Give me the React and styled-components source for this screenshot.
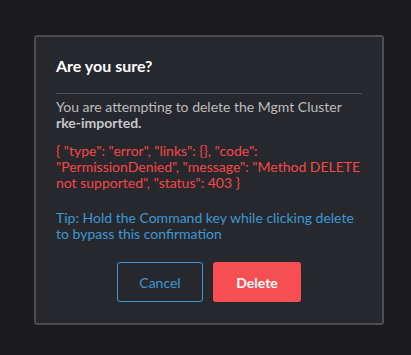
import React from 'react';
import styled, { createGlobalStyle } from 'styled-components';

const GlobalStyle = createGlobalStyle`
    html, body {
        margin: 0;
        padding: 0;
        background: #1b1b1f;
    }
    body {
        font-family: Lato, 'Liberation Sans', sans-serif;
        width: 411px;
        height: 355px;
        overflow: hidden;
    }
`;

const Backdrop = styled.div`
    width: 411px;
    height: 355px;
    padding: 35px 0 0 34px;
    box-sizing: border-box;
    display: flex;
    align-items: flex-start;
`;

const Card = styled.div`
    width: 350px;
    height: 290px;
    box-sizing: border-box;
    background: #27282d;
    border: 2px solid #4c4c51;
    border-radius: 3px;
    padding: 17px 20px 0;
    display: flex;
    flex-direction: column;
`;

const Title = styled.h4`
    margin: 0;
    padding-bottom: 15px;
    font-size: 16px;
    line-height: 24px;
    font-weight: 700;
    color: #ffffff;
    border-bottom: 1px solid #505156;
`;

const Body = styled.div`
    padding-top: 5px;
    font-size: 14px;
    line-height: 16px;
    color: #bdbdbf;

    b {
        font-weight: 700;
        color: #c8c8ca;
    }
`;

const ErrorText = styled.div`
    margin-top: 12px;
    color: #f64747;
    font-size: 14px;
    line-height: 16px;
`;

const Tip = styled.div`
    margin-top: 19px;
    color: #3d98d3;
    font-size: 14px;
    line-height: 16px;
`;

const Actions = styled.div`
    display: flex;
    justify-content: center;
    gap: 10px;
    margin-top: 20px;
`;

const Button = styled.button`
    height: 40px;
    box-sizing: border-box;
    border-radius: 3px;
    font-family: Lato, 'Liberation Sans', sans-serif;
    font-size: 14px;
    cursor: pointer;
    padding: 0;
    width: ${p => p.$width}px;
`;

const CancelButton = styled(Button)`
    background: transparent;
    border: 1px solid #3d98d3;
    color: #3d98d3;
`;

const DeleteButton = styled(Button)`
    background: #f64f51;
    border: none;
    color: #ffffff;
    font-weight: 700;
`;

const App = () => {
    return (
        <>
            <GlobalStyle />
            <Backdrop>
                <Card>
                    <Title>Are you sure?</Title>
                    <Body>
                        You are attempting to delete the Mgmt Cluster <b>rke-imported.</b>
                    </Body>
                    <ErrorText>
                        {'{ "type": "error", "links": {}, "code": "PermissionDenied", "message": "Method DELETE not supported", "status": 403 }'}
                    </ErrorText>
                    <Tip>Tip: Hold the Command key while clicking delete to bypass this confirmation</Tip>
                    <Actions>
                        <CancelButton $width={86}>Cancel</CancelButton>
                        <DeleteButton $width={88}>Delete</DeleteButton>
                    </Actions>
                </Card>
            </Backdrop>
        </>
    );
};

export default App;
